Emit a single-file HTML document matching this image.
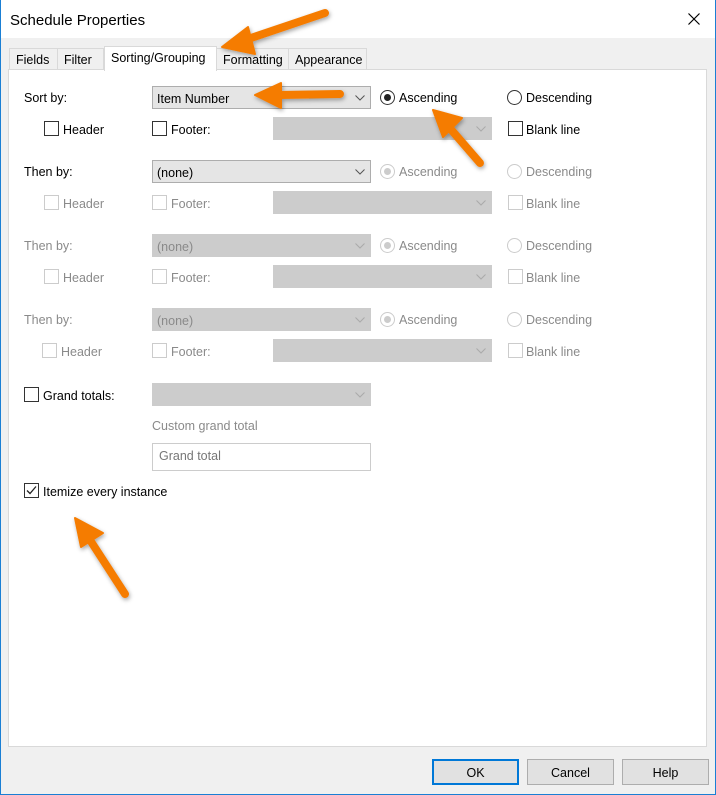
<!DOCTYPE html>
<html><head><style>
*{margin:0;padding:0;box-sizing:border-box}
body{width:716px;height:795px;background:#f0f0f0;font-family:"Liberation Sans",sans-serif;font-size:12px;color:#000;position:relative;overflow:hidden}
.a{position:absolute;white-space:nowrap}
.win{position:absolute;left:0;top:0;width:716px;height:795px;border:1px solid #1a7fd4;border-top:none}
.title{position:absolute;left:0;top:0;width:716px;height:38px;background:#fff}
.panel{position:absolute;left:8px;top:69px;width:699px;height:678px;background:#fff;border:1px solid #d9d9d9}
.tab{position:absolute;top:48px;height:22px;border:1px solid #d9d9d9;background:#f0f0f0;font-size:12.5px;padding:4px 0 0 6px}
.cb{position:absolute;width:15px;height:15px;border:1px solid #333;background:#fff}
.cb.d{border-color:#ccc}
.rd{position:absolute;width:15px;height:15px;border:1px solid #333;border-radius:50%;background:#fff}
.rd.d{border-color:#ccc}
.cmb{position:absolute;height:23px;border:1px solid #adadad;background:#e5e5e5;padding:5px 0 0 4px;font-size:12.5px}
.cmb.d{background:#ccc;border-color:#ccc;color:#8a8a8a}
.cmb svg{position:absolute;right:5px;top:8px}
.g{color:#8a8a8a}
.t{font-size:12.5px;padding-top:1px}
.btn{position:absolute;top:759px;width:87px;height:26px;border:1px solid #adadad;background:#e1e1e1;text-align:center;padding-top:6px;font-size:12.5px}
</style></head><body>
<div class="title"></div>
<div class="a" style="left:10px;top:12px;font-size:15px">Schedule Properties</div>
<svg class="a" style="left:688px;top:13px" width="12" height="12"><path d="M0.5 0.5L11.5 11.5M11.5 0.5L0.5 11.5" stroke="#000" stroke-width="1.2"/></svg>
<div class="panel"></div>
<div class="tab" style="left:9px;width:49px">Fields</div>
<div class="tab" style="left:57px;width:47px">Filter</div>
<div class="tab" style="left:216px;width:73px">Formatting</div>
<div class="tab" style="left:288px;width:79px">Appearance</div>
<div class="tab" style="left:104px;top:46px;width:113px;height:25px;background:#fff;border-bottom:none;padding-top:4px">Sorting/Grouping</div>

<div class="a t" style="left:24px;top:90px">Sort by:</div>
<div class="cmb" style="left:152px;top:86px;width:219px">Item Number<svg width="10" height="6"><path d="M0.5 0.5L5 5L9.5 0.5" fill="none" stroke="#555"/></svg></div>
<div class="rd" style="left:380px;top:90px"><div style="position:absolute;left:3px;top:3px;width:7px;height:7px;border-radius:50%;background:#222"></div></div>
<div class="a t" style="left:399px;top:90px">Ascending</div>
<div class="rd" style="left:507px;top:90px"></div>
<div class="a t" style="left:526px;top:90px">Descending</div>
<div class="cb" style="left:44px;top:121px"></div><div class="a t" style="left:63px;top:122px">Header</div>
<div class="cb" style="left:152px;top:121px"></div><div class="a t" style="left:171px;top:122px">Footer:</div>
<div class="cmb d" style="left:273px;top:117px;width:219px"><svg width="10" height="6"><path d="M0.5 0.5L5 5L9.5 0.5" fill="none" stroke="#aaa"/></svg></div>
<div class="cb" style="left:508px;top:121px"></div><div class="a t" style="left:526px;top:122px">Blank line</div>

<div class="a t" style="left:24px;top:164px">Then by:</div>
<div class="cmb" style="left:152px;top:160px;width:219px">(none)<svg width="10" height="6"><path d="M0.5 0.5L5 5L9.5 0.5" fill="none" stroke="#555"/></svg></div>
<div class="rd d" style="left:380px;top:164px"><div style="position:absolute;left:3px;top:3px;width:7px;height:7px;border-radius:50%;background:#ccc"></div></div>
<div class="a t g" style="left:399px;top:164px">Ascending</div>
<div class="rd d" style="left:507px;top:164px"></div>
<div class="a t g" style="left:526px;top:164px">Descending</div>
<div class="cb d" style="left:44px;top:195px"></div><div class="a t g" style="left:63px;top:196px">Header</div>
<div class="cb d" style="left:152px;top:195px"></div><div class="a t g" style="left:171px;top:196px">Footer:</div>
<div class="cmb d" style="left:273px;top:191px;width:219px"><svg width="10" height="6"><path d="M0.5 0.5L5 5L9.5 0.5" fill="none" stroke="#aaa"/></svg></div>
<div class="cb d" style="left:508px;top:195px"></div><div class="a t g" style="left:526px;top:196px">Blank line</div>

<div class="a t g" style="left:24px;top:238px">Then by:</div>
<div class="cmb d" style="left:152px;top:234px;width:219px">(none)<svg width="10" height="6"><path d="M0.5 0.5L5 5L9.5 0.5" fill="none" stroke="#aaa"/></svg></div>
<div class="rd d" style="left:380px;top:238px"><div style="position:absolute;left:3px;top:3px;width:7px;height:7px;border-radius:50%;background:#ccc"></div></div>
<div class="a t g" style="left:399px;top:238px">Ascending</div>
<div class="rd d" style="left:507px;top:238px"></div>
<div class="a t g" style="left:526px;top:238px">Descending</div>
<div class="cb d" style="left:44px;top:269px"></div><div class="a t g" style="left:63px;top:270px">Header</div>
<div class="cb d" style="left:152px;top:269px"></div><div class="a t g" style="left:171px;top:270px">Footer:</div>
<div class="cmb d" style="left:273px;top:265px;width:219px"><svg width="10" height="6"><path d="M0.5 0.5L5 5L9.5 0.5" fill="none" stroke="#aaa"/></svg></div>
<div class="cb d" style="left:508px;top:269px"></div><div class="a t g" style="left:526px;top:270px">Blank line</div>

<div class="a t g" style="left:24px;top:312px">Then by:</div>
<div class="cmb d" style="left:152px;top:308px;width:219px">(none)<svg width="10" height="6"><path d="M0.5 0.5L5 5L9.5 0.5" fill="none" stroke="#aaa"/></svg></div>
<div class="rd d" style="left:380px;top:312px"><div style="position:absolute;left:3px;top:3px;width:7px;height:7px;border-radius:50%;background:#ccc"></div></div>
<div class="a t g" style="left:399px;top:312px">Ascending</div>
<div class="rd d" style="left:507px;top:312px"></div>
<div class="a t g" style="left:526px;top:312px">Descending</div>
<div class="cb d" style="left:42px;top:343px"></div><div class="a t g" style="left:61px;top:344px">Header</div>
<div class="cb d" style="left:152px;top:343px"></div><div class="a t g" style="left:171px;top:344px">Footer:</div>
<div class="cmb d" style="left:273px;top:339px;width:219px"><svg width="10" height="6"><path d="M0.5 0.5L5 5L9.5 0.5" fill="none" stroke="#aaa"/></svg></div>
<div class="cb d" style="left:508px;top:343px"></div><div class="a t g" style="left:526px;top:344px">Blank line</div>

<div class="cb" style="left:24px;top:387px"></div><div class="a t" style="left:43px;top:388px">Grand totals:</div>
<div class="cmb d" style="left:152px;top:383px;width:219px;background:#ccc"><svg width="10" height="6"><path d="M0.5 0.5L5 5L9.5 0.5" fill="none" stroke="#aaa"/></svg></div>
<div class="a t g" style="left:152px;top:418px">Custom grand total</div>
<div class="a" style="left:152px;top:443px;width:219px;height:28px;border:1px solid #ccc;background:#fff;padding:5px 0 0 6px;color:#777;font-size:12.5px">Grand total</div>
<div class="cb" style="left:24px;top:483px"><svg width="13" height="13" style="position:absolute;left:0;top:0"><path d="M2 6.5L5 9.5L11 2.5" fill="none" stroke="#222" stroke-width="1.3"/></svg></div>
<div class="a t" style="left:43px;top:484px">Itemize every instance</div>

<div class="btn" style="left:432px;border:2px solid #0078d7;padding-top:5px">OK</div>
<div class="btn" style="left:527px">Cancel</div>
<div class="btn" style="left:622px">Help</div>
<div class="win"></div>

<svg class="a" style="left:0;top:0" width="716" height="795">
<defs><filter id="s" x="-20%" y="-20%" width="140%" height="140%"><feDropShadow dx="1" dy="2" stdDeviation="2" flood-opacity="0.35"/></filter></defs>
<g fill="#f57c00" stroke="#f57c00" stroke-linecap="round" stroke-linejoin="round" filter="url(#s)">
<path d="M325 13L245 40" stroke-width="8"/><path d="M222 47L248 27L255 54Z" stroke-width="2"/>
<path d="M340 94L280 95" stroke-width="8"/><path d="M255 95L281 83L281 108Z" stroke-width="2"/>
<path d="M480 163L448 126" stroke-width="8"/><path d="M433 110L462 118L443 137Z" stroke-width="2"/>
<path d="M125 594L90 540" stroke-width="8"/><path d="M75 518L103 533L81 547Z" stroke-width="2"/>
</g></svg>
</body></html>
